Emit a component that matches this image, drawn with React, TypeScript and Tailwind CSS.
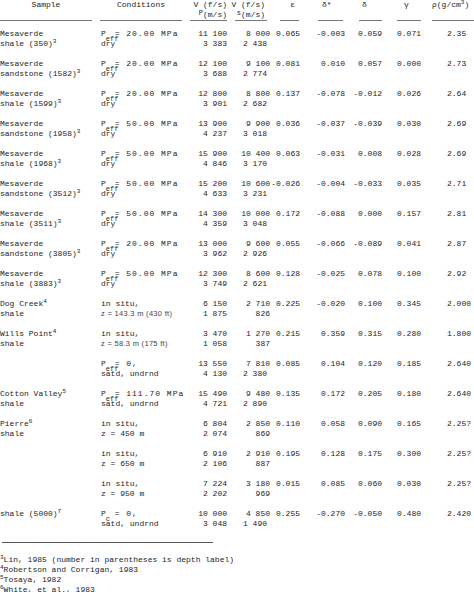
import React from "react";

type Cond =
  | { kind: "p"; sub: string; rest: string; l2: string }
  | { kind: "situ"; l2: string; small?: boolean };

type Row = {
  name: [string, string?];
  name2?: [string, string?];
  cond: Cond;
  vp: [string, string];
  vs: [string, string];
  e: string;
  ds: string;
  d: string;
  g: string;
  r: string;
};

const dry = (v: string): Cond => ({ kind: "p", sub: "eff", rest: `= ${v} MPa`, l2: "dry" });

const rows: Row[] = [
  { name: ["Mesaverde"], name2: ["shale (350)", "3"], cond: dry("20.00"), vp: ["11 100", "3 383"], vs: ["8 000", "2 438"], e: "0.065", ds: "-0.003", d: "0.059", g: "0.071", r: "2.35" },
  { name: ["Mesaverde"], name2: ["sandstone (1582)", "3"], cond: dry("20.00"), vp: ["12 100", "3 688"], vs: ["9 100", "2 774"], e: "0.081", ds: "0.010", d: "0.057", g: "0.000", r: "2.73" },
  { name: ["Mesaverde"], name2: ["shale (1599)", "3"], cond: dry("20.00"), vp: ["12 800", "3 901"], vs: ["8 800", "2 682"], e: "0.137", ds: "-0.078", d: "-0.012", g: "0.026", r: "2.64" },
  { name: ["Mesaverde"], name2: ["sandstone (1958)", "3"], cond: dry("50.00"), vp: ["13 900", "4 237"], vs: ["9 900", "3 018"], e: "0.036", ds: "-0.037", d: "-0.039", g: "0.030", r: "2.69" },
  { name: ["Mesaverde"], name2: ["shale (1968)", "3"], cond: dry("50.00"), vp: ["15 900", "4 846"], vs: ["10 400", "3 170"], e: "0.063", ds: "-0.031", d: "0.008", g: "0.028", r: "2.69" },
  { name: ["Mesaverde"], name2: ["sandstone (3512)", "3"], cond: dry("50.00"), vp: ["15 200", "4 633"], vs: ["10 600", "3 231"], e: "-0.026", ds: "-0.004", d: "-0.033", g: "0.035", r: "2.71" },
  { name: ["Mesaverde"], name2: ["shale (3511)", "3"], cond: dry("50.00"), vp: ["14 300", "4 359"], vs: ["10 000", "3 048"], e: "0.172", ds: "-0.088", d: "0.000", g: "0.157", r: "2.81" },
  { name: ["Mesaverde"], name2: ["sandstone (3805)", "3"], cond: dry("20.00"), vp: ["13 000", "3 962"], vs: ["9 600", "2 926"], e: "0.055", ds: "-0.066", d: "-0.089", g: "0.041", r: "2.87" },
  { name: ["Mesaverde"], name2: ["shale (3883)", "3"], cond: dry("50.00"), vp: ["12 300", "3 749"], vs: ["8 600", "2 621"], e: "0.128", ds: "-0.025", d: "0.078", g: "0.100", r: "2.92" },
  { name: ["Dog Creek", "4"], name2: ["shale"], cond: { kind: "situ", l2: "z = 143.3 m (430 ft)", small: true }, vp: ["6 150", "1 875"], vs: ["2 710", "826"], e: "0.225", ds: "-0.020", d: "0.100", g: "0.345", r: "2.000" },
  { name: ["Wills Point", "4"], name2: ["shale"], cond: { kind: "situ", l2: "z = 58.3 m (175 ft)", small: true }, vp: ["3 470", "1 058"], vs: ["1 270", "387"], e: "0.215", ds: "0.359", d: "0.315", g: "0.280", r: "1.800" },
  { name: [""], cond: { kind: "p", sub: "eff", rest: "= 0,", l2: "satd, undrnd" }, vp: ["13 550", "4 130"], vs: ["7 810", "2 380"], e: "0.085", ds: "0.104", d: "0.120", g: "0.185", r: "2.640" },
  { name: ["Cotton Valley", "5"], name2: ["shale"], cond: { kind: "p", sub: "eff", rest: "= 111.70 MPa", l2: "satd, undrnd" }, vp: ["15 490", "4 721"], vs: ["9 480", "2 890"], e: "0.135", ds: "0.172", d: "0.205", g: "0.180", r: "2.640" },
  { name: ["Pierre", "6"], name2: ["shale"], cond: { kind: "situ", l2: "z = 450 m" }, vp: ["6 804", "2 074"], vs: ["2 850", "869"], e: "0.110", ds: "0.058", d: "0.090", g: "0.165", r: "2.25?" },
  { name: [""], cond: { kind: "situ", l2: "z = 650 m" }, vp: ["6 910", "2 106"], vs: ["2 910", "887"], e: "0.195", ds: "0.128", d: "0.175", g: "0.300", r: "2.25?" },
  { name: [""], cond: { kind: "situ", l2: "z = 950 m" }, vp: ["7 224", "2 202"], vs: ["3 180", "969"], e: "0.015", ds: "0.085", d: "0.060", g: "0.030", r: "2.25?" },
  { name: ["shale (5000)", "7"], cond: { kind: "p", sub: "c", rest: "= 0,", l2: "satd, undrnd" }, vp: ["10 000", "3 048"], vs: ["4 850", "1 490"], e: "0.255", ds: "-0.270", d: "-0.050", g: "0.480", r: "2.420" },
];

// column edges: 0 | 100 | 192 | 227 | 270 | 300 | 345 | 382 | 421 | 474
const cols = "grid grid-cols-[100px_92px_35px_43px_30px_45px_37px_39px_53px]";

function Label({ t }: { t?: [string, string?] }) {
  if (!t) return <div className="h-[10px]" />;
  return (
    <div className="h-[10px] whitespace-pre">
      {t[0]}
      {t[1] && <sup className="text-[6px]">{t[1]}</sup>}
    </div>
  );
}

function Conditions({ c }: { c: Cond }) {
  if (c.kind === "situ") {
    return (
      <div className="pl-px">
        <div className="h-[10px]">in situ,</div>
        <div
          className={
            c.small
              ? "h-[10px] whitespace-pre font-['Liberation_Sans',sans-serif] text-[7.5px] tracking-[0.3px] text-[#444]"
              : "h-[10px] whitespace-pre"
          }
        >
          {c.l2}
        </div>
      </div>
    );
  }
  return (
    <div className="pl-px">
      <div className="h-[10px] whitespace-pre">
        P
        <span className="relative top-[5px] inline-block w-0 whitespace-nowrap text-[7px] leading-none">
          {c.sub}
        </span>
        <span className="pl-[3px] tracking-[1px]"> {c.rest}</span>
      </div>
      <div className="h-[10px] whitespace-pre">{c.l2}</div>
    </div>
  );
}

function Num({ v, cls = "" }: { v: string; cls?: string }) {
  return <div className={`h-[10px] text-right whitespace-pre ${cls}`}>{v}</div>;
}

function Rule({ cls }: { cls: string }) {
  return <div className={`h-px bg-[#777] ${cls}`} />;
}

export default function App() {
  return (
    <div className="w-[474px] h-[592px] overflow-hidden bg-white text-[#1e1e1e] font-['Liberation_Mono',monospace] text-[8px] leading-[10px]">
      {/* header */}
      <div className={cols}>
        <div>
          <div className="h-[20px] pr-[8px] text-center">Sample</div>
          <Rule cls="mr-[8px]" />
        </div>
        <div>
          <div className="h-[20px] pr-[10px] text-center">Conditions</div>
          <Rule cls="mr-[10px]" />
        </div>
        <div>
          <div className="h-[20px] text-right">
            <div className="h-[10px] whitespace-pre">V (f/s)</div>
            <div className="h-[10px] whitespace-pre">
              <span className="relative -top-[2px] text-[7px]">P</span>(m/s)
            </div>
          </div>
          <Rule cls="-ml-[2px]" />
        </div>
        <div>
          <div className="h-[20px] pr-[5px] text-right">
            <div className="h-[10px] whitespace-pre">V (f/s)</div>
            <div className="h-[10px] whitespace-pre">
              <span className="relative -top-[2px] text-[7px]">s</span>(m/s)
            </div>
          </div>
          <Rule cls="ml-[8px] mr-[3px]" />
        </div>
        <div>
          <div className="h-[20px] pr-[5px] text-right">ε</div>
          <Rule cls="ml-[10px] mr-[1px]" />
        </div>
        <div>
          <div className="h-[20px] pl-[22px]">δ*</div>
          <Rule cls="ml-[18px] mr-[2px]" />
        </div>
        <div>
          <div className="h-[20px] pl-[17px]">δ</div>
          <Rule cls="ml-[14px]" />
        </div>
        <div>
          <div className="h-[20px] pl-[22px]">γ</div>
          <Rule cls="ml-[15px]" />
        </div>
        <div>
          <div className="h-[20px] pl-[11px] whitespace-pre">
            ρ(g/cm<sup className="text-[6px]">3</sup>)
          </div>
          <Rule cls="ml-[11px]" />
        </div>
      </div>

      {/* body */}
      <div className="mt-[8px] flex flex-col gap-[10px]">
        {rows.map((r, i) => (
          <div key={i} className={`${cols} h-[20px]`}>
            <div>
              <Label t={r.name[0] ? r.name : undefined} />
              <Label t={r.name2} />
            </div>
            <Conditions c={r.cond} />
            <div>
              <Num v={r.vp[0]} />
              <Num v={r.vp[1]} />
            </div>
            <div>
              <Num v={r.vs[0]} />
              <Num v={r.vs[1]} cls={r.vs[1].length > 3 ? "pr-[3px]" : ""} />
            </div>
            <Num v={r.e} />
            <Num v={r.ds} />
            <Num v={r.d} />
            <Num v={r.g} />
            <div className="h-[10px] pl-[26px]">{r.r}</div>
          </div>
        ))}
      </div>

      {/* footer */}
      <div className="mt-[13px] ml-[2px] h-px w-[211px] bg-[#555]" />
      <div className="mt-[12px] leading-[10px]">
        <div className="whitespace-pre">
          <sup className="text-[6px]">3</sup>Lin, 1985 (number in parentheses is depth label)
        </div>
        <div className="whitespace-pre">
          <sup className="text-[6px]">4</sup>Robertson and Corrigan, 1983
        </div>
        <div className="whitespace-pre">
          <sup className="text-[6px]">5</sup>Tosaya, 1982
        </div>
        <div className="whitespace-pre">
          <sup className="text-[6px]">6</sup>White, et al., 1983
        </div>
      </div>
    </div>
  );
}
